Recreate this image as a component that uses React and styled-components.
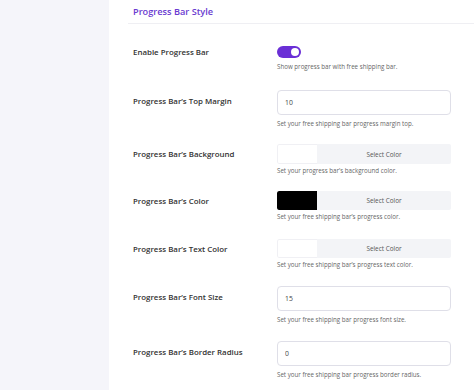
import React, { useState } from 'react';
import styled, { createGlobalStyle } from 'styled-components';

const GlobalStyle = createGlobalStyle`
  html, body {
    margin: 0;
    padding: 0;
    background: #fff;
    font-family: "Open Sans", "Noto Sans", sans-serif;
  }
`;

const Page = styled.div`
  display: flex;
  width: 474px;
  height: 392px;
  overflow: hidden;
`;

const Sidebar = styled.div`
  width: 109px;
  height: 390px;
  background: #f5f5fa;
  flex-shrink: 0;
`;

const Main = styled.div`
  flex: 1;
  margin-left: 19px;
`;

const Heading = styled.div`
  height: 24px;
  padding-left: 5px;
  display: flex;
  align-items: center;
  border-bottom: 1px solid #efeff3;
  color: #6a3bd0;
  font-size: 9.2px;
  font-weight: 600;
  box-sizing: border-box;
`;

const Fields = styled.div`
  padding: 22px 0 0 5px;
  display: flex;
  flex-direction: column;
`;

const Row = styled.div`
  display: grid;
  grid-template-columns: 144px 174px;
  align-items: center;
  margin-top: ${p => p.$mt || 0}px;
`;

const Label = styled.div`
  font-size: 7.9px;
  font-weight: 600;
  color: #333;
  margin-top: ${p => p.$offset || 0}px;
`;

const Desc = styled.div`
  grid-column: 2;
  font-size: 6.2px;
  color: #666;
  line-height: 9px;
  margin-top: ${p => p.$gap || 3}px;
`;

const Toggle = styled.div`
  width: 24px;
  height: 12px;
  border-radius: 6px;
  background: #6a2fd6;
  position: relative;
  &::after {
    content: '';
    position: absolute;
    right: 2px;
    top: 2px;
    width: 8px;
    height: 8px;
    border-radius: 50%;
    background: #fff;
  }
`;

const Input = styled.input`
  width: 174px;
  height: 25px;
  box-sizing: border-box;
  border: 1px solid #dfdfe8;
  border-radius: 4px;
  padding: 0 7px;
  font-family: inherit;
  font-size: 6.8px;
  color: #444;
  outline: none;
`;

const ColorPicker = styled.div`
  display: flex;
  width: 174px;
  height: ${p => p.$h}px;
  border-radius: 2px;
  overflow: hidden;
`;

const Swatch = styled.div`
  width: 40px;
  box-sizing: border-box;
  background: ${p => p.$color};
  border: 1px solid ${p => (p.$color === '#fff' ? '#f0f0f4' : p.$color)};
  border-right: none;
  border-radius: 2px 0 0 2px;
`;

const SelectBtn = styled.div`
  flex: 1;
  background: #f3f4f7;
  display: flex;
  align-items: center;
  justify-content: center;
  font-size: 6.4px;
  color: #555;
`;

const fields = [
  { label: 'Progress Bar\u2019s Top Margin', type: 'input', value: '10', mt: 19, desc: 'Set your free shipping bar progress margin top.' },
  { label: 'Progress Bar\u2019s Background', type: 'color', color: '#fff', h: 20, mt: 16, desc: 'Set your progress bar\u2019s background color.' },
  { label: 'Progress Bar\u2019s Color', type: 'color', color: '#000', h: 19, mt: 16, desc: 'Set your free shipping bar\u2019s progress color.' },
  { label: 'Progress Bar\u2019s Text Color', type: 'color', color: '#fff', h: 19, mt: 18, desc: 'Set your free shipping bar\u2019s progress text color.' },
  { label: 'Progress Bar\u2019s Font Size', type: 'input', value: '15', mt: 17, desc: 'Set your free shipping bar progress font size.' },
  { label: 'Progress Bar\u2019s Border Radius', type: 'input', value: '0', mt: 17, desc: 'Set your free shipping bar progress border radius.' },
];

export default function App() {
  const [values, setValues] = useState(fields.map(f => f.value || ''));

  return (
    <Page>
      <GlobalStyle />
      <Sidebar />
      <Main>
        <Heading>Progress Bar Style</Heading>
        <Fields>
          <Row>
            <Label>Enable Progress Bar</Label>
            <Toggle />
            <Desc $gap={4}>Show progress bar with free shipping bar.</Desc>
          </Row>
          {fields.map((f, i) => (
            <Row key={i} $mt={f.mt}>
              <Label $offset={f.type === 'input' ? -4 : 0}>{f.label}</Label>
              {f.type === 'input' ? (
                <Input
                  value={values[i]}
                  onChange={e => {
                    const next = [...values];
                    next[i] = e.target.value;
                    setValues(next);
                  }}
                />
              ) : (
                <ColorPicker $h={f.h}>
                  <Swatch $color={f.color} />
                  <SelectBtn>Select Color</SelectBtn>
                </ColorPicker>
              )}
              <Desc $gap={f.type === 'input' ? 4 : 2}>{f.desc}</Desc>
            </Row>
          ))}
        </Fields>
      </Main>
    </Page>
  );
}
